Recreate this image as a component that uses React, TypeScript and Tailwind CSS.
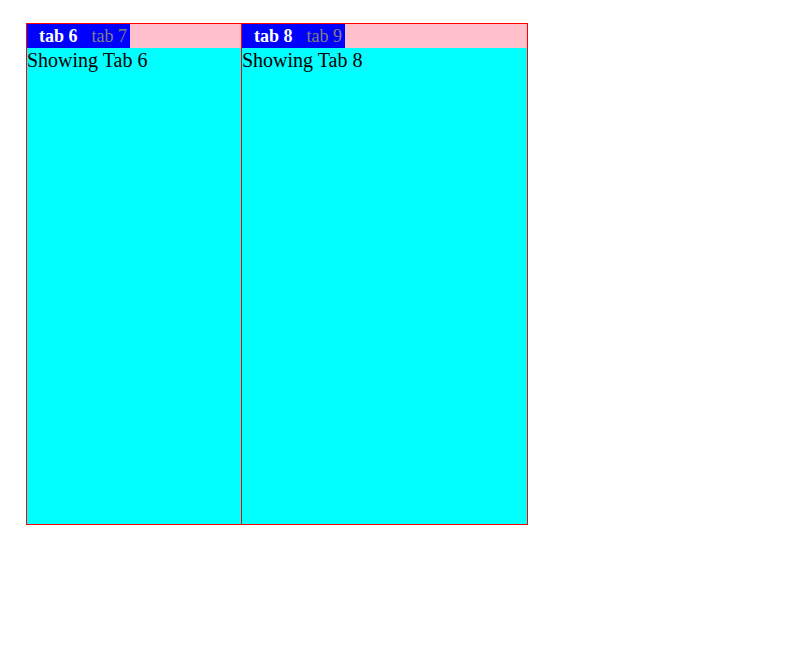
const serif = { fontFamily: '"Liberation Serif", "Times New Roman", serif' };

function Pane({ active, other, width }: { active: number; other: number; width: string }) {
  return (
    <div className={`flex flex-col h-full ${width}`}>
      <div className="flex h-[24px] shrink-0 bg-[pink]">
        <div className="flex items-start bg-[#0000ff] pl-[12px] pr-[3px] text-[18px] leading-[24px]">
          <span className="font-bold text-white mr-[14px]">tab {active}</span>
          <span className="text-[#808080]">tab {other}</span>
        </div>
      </div>
      <div className="flex-1 bg-[#00ffff] text-[20px] leading-[25px] text-black">
        Showing Tab {active}
      </div>
    </div>
  );
}

export default function App() {
  return (
    <div className="p-[26px] pt-[23px]" style={serif}>
      <div className="flex w-[502px] h-[502px] border border-[#ff0000]">
        <Pane active={6} other={7} width="w-[214px]" />
        <div className="w-px h-full shrink-0 bg-[#ff0000]" />
        <Pane active={8} other={9} width="flex-1" />
      </div>
    </div>
  );
}
